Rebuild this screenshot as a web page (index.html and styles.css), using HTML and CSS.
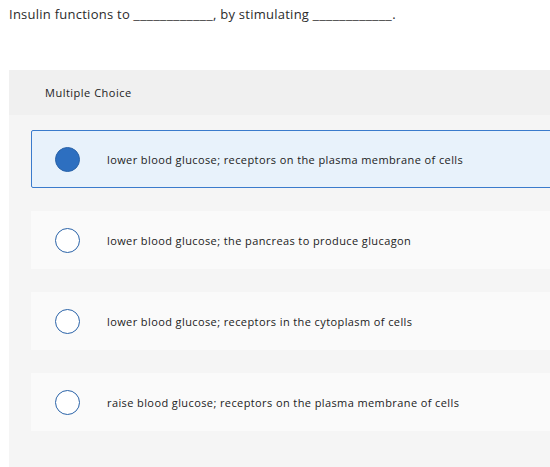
FILE: index.html
```html
<!DOCTYPE html>
<html>
<head>
<meta charset="utf-8">
<link rel="stylesheet" href="styles.css">
</head>
<body>
<p class="prompt">Insulin functions to <span class="blank">____________</span>, by stimulating <span class="blank">____________</span>.</p>
<div class="panel">
  <div class="panel-head">Multiple Choice</div>
  <div class="panel-body">
    <div class="option selected"><span class="radio"></span><span class="label">lower blood glucose; receptors on the plasma membrane of cells</span></div>
    <div class="option"><span class="radio"></span><span class="label">lower blood glucose; the pancreas to produce glucagon</span></div>
    <div class="option"><span class="radio"></span><span class="label">lower blood glucose; receptors in the cytoplasm of cells</span></div>
    <div class="option"><span class="radio"></span><span class="label">raise blood glucose; receptors on the plasma membrane of cells</span></div>
  </div>
</div>
</body>
</html>
```
FILE: styles.css
```css
html, body { margin: 0; padding: 0; background: #fff; overflow: hidden; }
body { font-family: "Open Sans", "Liberation Sans", sans-serif; color: #333; width: 550px; height: 467px; }
.prompt { margin: 0; padding: 6px 0 0 9px; font-size: 13px; letter-spacing: 0.25px; line-height: 17px; height: 47px; box-sizing: border-box; color: #2b2b2b; }
.blank { font-family: "Liberation Sans", sans-serif; font-size: 11px; letter-spacing: 0.5px; }
.panel { margin-left: 9px; margin-top: 23px; width: 620px; }
.panel-head { background: #f0f0f0; height: 45px; display: flex; align-items: center; padding-left: 36px; font-size: 11px; letter-spacing: 0.5px; color: #222; }
.panel-body { background: #f5f5f5; padding: 15px 0 40px 22px; display: flex; flex-direction: column; gap: 23px; }
.option { height: 58px; box-sizing: border-box; background: #fafafa; display: flex; align-items: center; padding-left: 23px; border: 1px solid transparent; }
.option.selected { background: #e8f2fb; border-color: #3a7bcc; border-radius: 2px; }
.radio { width: 25px; height: 25px; box-sizing: border-box; border: 1.5px solid #2a63a8; border-radius: 50%; background: #fff; flex: none; }
.selected .radio { background: #2d6fc0; border-color: #2a63a8; }
.label { margin-left: 27px; font-size: 11px; letter-spacing: 0.4px; color: #222; }
```
